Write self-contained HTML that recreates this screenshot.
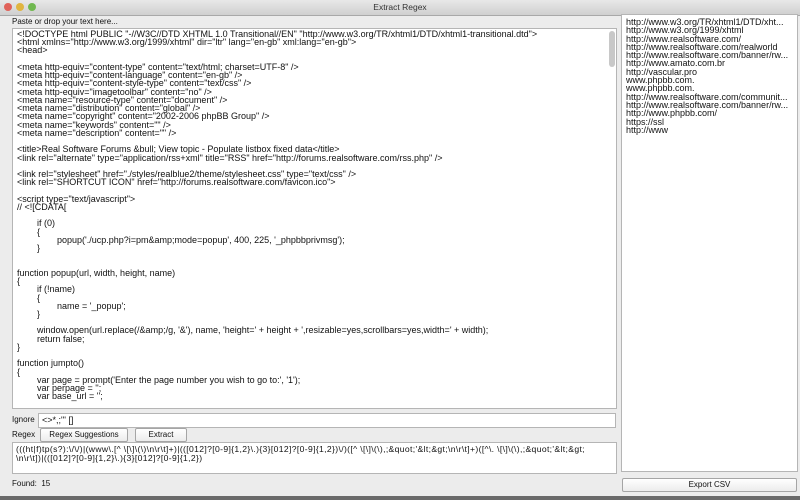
<!DOCTYPE html>
<html><head><style>
body{margin:0;width:800px;height:500px;background:#ececec;font-family:"Liberation Sans",sans-serif;position:relative;overflow:hidden;color:#111}
.tb{position:absolute;left:0;top:0;width:800px;height:15px;background:linear-gradient(#e8e8e8,#cfcfcf);border-bottom:1px solid #a8a8a8;text-align:center;font-size:8.5px;line-height:15px;color:#333}
.dot{position:absolute;top:3px;width:8px;height:8px;border-radius:50%}
.box{position:absolute;background:#fff;border:1px solid #b5b5b5}
pre{margin:0;font-family:"Liberation Sans",sans-serif;font-size:9px;line-height:8.23px;white-space:pre}
.lbl{position:absolute;font-size:8px}
.btn{position:absolute;height:12px;background:linear-gradient(#fff,#ececec);border:1px solid #a5a5a5;border-radius:2px;font-size:8px;line-height:12px;text-align:center}
</style></head><body>
<div class="tb">Extract Regex
<div class="dot" style="left:4px;background:#e0625a"></div>
<div class="dot" style="left:16px;background:#e0b540"></div>
<div class="dot" style="left:28px;background:#70b84f"></div>
</div>
<div class="lbl" style="left:12px;top:17px">Paste or drop your text here...</div>
<div class="box" style="left:12px;top:28px;width:603px;height:379px;overflow:hidden">
<div style="position:absolute;right:1px;top:2px;width:6px;height:36px;background:#c8c8c8;border-radius:3px"></div>
<pre style="position:absolute;left:4px;top:1px">&lt;!DOCTYPE html PUBLIC "-//W3C//DTD XHTML 1.0 Transitional//EN" "http://www.w3.org/TR/xhtml1/DTD/xhtml1-transitional.dtd"&gt;
&lt;html xmlns="http://www.w3.org/1999/xhtml" dir="ltr" lang="en-gb" xml:lang="en-gb"&gt;
&lt;head&gt;

&lt;meta http-equiv="content-type" content="text/html; charset=UTF-8" /&gt;
&lt;meta http-equiv="content-language" content="en-gb" /&gt;
&lt;meta http-equiv="content-style-type" content="text/css" /&gt;
&lt;meta http-equiv="imagetoolbar" content="no" /&gt;
&lt;meta name="resource-type" content="document" /&gt;
&lt;meta name="distribution" content="global" /&gt;
&lt;meta name="copyright" content="2002-2006 phpBB Group" /&gt;
&lt;meta name="keywords" content="" /&gt;
&lt;meta name="description" content="" /&gt;

&lt;title&gt;Real Software Forums &amp;bull; View topic - Populate listbox fixed data&lt;/title&gt;
&lt;link rel="alternate" type="application/rss+xml" title="RSS" href="http://forums.realsoftware.com/rss.php" /&gt;

&lt;link rel="stylesheet" href="./styles/realblue2/theme/stylesheet.css" type="text/css" /&gt;
&lt;link rel="SHORTCUT ICON" href="http://forums.realsoftware.com/favicon.ico"&gt;

&lt;script type="text/javascript"&gt;
// &lt;![CDATA[

        if (0)
        {
                popup('./ucp.php?i=pm&amp;amp;mode=popup', 400, 225, '_phpbbprivmsg');
        }


function popup(url, width, height, name)
{
        if (!name)
        {
                name = '_popup';
        }

        window.open(url.replace(/&amp;amp;/g, '&amp;'), name, 'height=' + height + ',resizable=yes,scrollbars=yes,width=' + width);
        return false;
}

function jumpto()
{
        var page = prompt('Enter the page number you wish to go to:', '1');
        var perpage = '';
        var base_url = '';</pre>
</div>
<div class="lbl" style="left:12px;top:415px">Ignore</div>
<div class="box" style="left:38px;top:413px;width:576px;height:13px"><pre style="position:absolute;left:3px;top:2px">&lt;&gt;*,;"' []</pre></div>
<div class="lbl" style="left:12px;top:430px">Regex</div>
<div class="btn" style="left:40px;top:428px;width:86px">Regex Suggestions</div>
<div class="btn" style="left:135px;top:428px;width:50px">Extract</div>
<div class="box" style="left:12px;top:442px;width:603px;height:30px"><pre style="position:absolute;left:3px;top:2px;font-size:8.6px;line-height:9px;letter-spacing:0.35px">(((ht|f)tp(s?):\/\/)|(www\.[^ \[\]\(\)\n\r\t]+)|(([012]?[0-9]{1,2}\.){3}[012]?[0-9]{1,2})\/)([^ \[\]\(\),;&amp;quot;'&amp;lt;&amp;gt;\n\r\t]+)([^\. \[\]\(\),;&amp;quot;'&amp;lt;&amp;gt;
\n\r\t])|(([012]?[0-9]{1,2}\.){3}[012]?[0-9]{1,2})</pre></div>
<div class="lbl" style="left:12px;top:479px">Found:&nbsp; 15</div>
<div class="box" style="left:621px;top:14px;width:175px;height:456px;overflow:hidden"><pre style="position:absolute;left:4px;top:3px;font-size:9px;line-height:8.3px">http://www.w3.org/TR/xhtml1/DTD/xht...
http://www.w3.org/1999/xhtml
http://www.realsoftware.com/
http://www.realsoftware.com/realworld
http://www.realsoftware.com/banner/rw...
http://www.amato.com.br
http://vascular.pro
www.phpbb.com.
www.phpbb.com.
http://www.realsoftware.com/communit...
http://www.realsoftware.com/banner/rw...
http://www.phpbb.com/
https://ssl
http://www</pre></div>
<div class="btn" style="left:622px;top:478px;width:173px">Export CSV</div>
<div style="position:absolute;left:0;top:496px;width:800px;height:4px;background:#6a6a6a"></div>
</body></html>
